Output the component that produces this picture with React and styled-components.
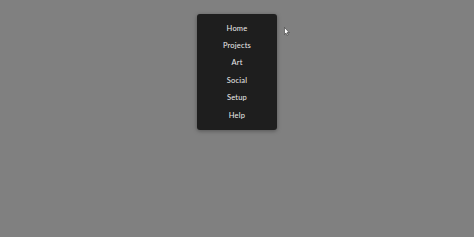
import styled, { createGlobalStyle } from 'styled-components'

const Global = createGlobalStyle`
    html, body {
        margin: 0;
        padding: 0;
        background: #808080;
        height: 100%;
    }
    #root {
        min-height: 100vh;
    }
`

const Page = styled.div`
    position: relative;
    display: flex;
    justify-content: center;
    align-items: flex-start;
    padding-top: 14px;
    min-height: 100vh;
    box-sizing: border-box;
    font-family: 'Lato', 'Noto Sans', sans-serif;
`

const Menu = styled.ul`
    list-style: none;
    margin: 0;
    padding: 5.5px 0 6.5px;
    width: 80px;
    box-sizing: border-box;
    background-color: #1e1e1e;
    border-radius: 3px;
    box-shadow: 0 1px 4px rgba(0, 0, 0, 0.35);
`

const Item = styled.li`
    height: 17.4px;
    display: flex;
    align-items: center;
    justify-content: center;
    color: #ececec;
    font-size: 7.5px;
    letter-spacing: 0.2px;
`

const Cursor = styled.svg`
    position: absolute;
    left: 284px;
    top: 27px;
`

const items = ['Home', 'Projects', 'Art', 'Social', 'Setup', 'Help']

const App = () => {
    return (
        <Page>
            <Global />
            <Menu>
                {items.map((label) => (
                    <Item key={label}>{label}</Item>
                ))}
            </Menu>
            <Cursor width="6" height="9" viewBox="0 0 6 9">
                <path d="M0.5 0.5 L0.5 7.5 L2 6 L3.2 8.5 L4.2 8 L3 5.6 L5.2 5.6 Z" fill="#fff" stroke="#222" strokeWidth="0.5" />
            </Cursor>
        </Page>
    )
}

export default App
